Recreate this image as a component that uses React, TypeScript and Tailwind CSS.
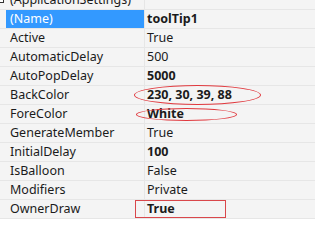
import React from "react";

type Row = { name: string; value: string; bold?: boolean; selected?: boolean; mark?: "ellipse1" | "ellipse2" | "rect" };

const rows: Row[] = [
  { name: "(Name)", value: "toolTip1", bold: true, selected: true },
  { name: "Active", value: "True" },
  { name: "AutomaticDelay", value: "500" },
  { name: "AutoPopDelay", value: "5000", bold: true },
  { name: "BackColor", value: "230, 30, 39, 88", bold: true, mark: "ellipse1" },
  { name: "ForeColor", value: "White", bold: true, mark: "ellipse2" },
  { name: "GenerateMember", value: "True" },
  { name: "InitialDelay", value: "100", bold: true },
  { name: "IsBalloon", value: "False" },
  { name: "Modifiers", value: "Private" },
  { name: "OwnerDraw", value: "True", bold: true, mark: "rect" },
];

export default function App() {
  return (
    <div
      className="w-[321px] h-[227px] overflow-hidden bg-white text-[12.5px] text-[#1b1b1b] leading-none"
      style={{ fontFamily: '"Noto Sans", Arial, sans-serif' }}
    >
      <div className="w-[315px] bg-[#f4f4f4] mt-[-9px]">
        <div className="relative flex h-[19px] border-b border-[#e6e6e6]">
          <div className="absolute left-[-3px] top-[5px] w-[7px] h-[7px] border border-[#333] bg-white" />
          <div className="w-[144px] pl-[10px] flex items-center">(ApplicationSettings)</div>
          <div className="flex-1 border-l border-[#e6e6e6]" />
        </div>
        {rows.map((r) => (
          <div key={r.name} className="flex h-[19px] border-b border-[#e6e6e6]">
            <div className="w-[6px]" />
            <div
              className={
                r.selected
                  ? "w-[138px] pl-[4px] flex items-center bg-[#3399ff] text-white"
                  : "w-[138px] pl-[4px] flex items-center"
              }
            >
              {r.name}
            </div>
            <div className="relative flex-1 border-l border-[#e6e6e6] pl-[2px] flex items-center">
              <span className={r.bold ? "font-bold" : ""}>{r.value}</span>
              {r.mark === "ellipse1" && (
                <div className="absolute left-[-11px] top-[-1px] w-[127px] h-[20px] rounded-[50%] border border-[#e0393e]" />
              )}
              {r.mark === "ellipse2" && (
                <div className="absolute left-[-9px] top-[3px] w-[101px] h-[13px] rounded-[50%] border border-[#e0393e]" />
              )}
              {r.mark === "rect" && (
                <div className="absolute left-[-10px] top-[0px] w-[91px] h-[18px] border border-[#d9474b]" />
              )}
            </div>
          </div>
        ))}
      </div>
    </div>
  );
}
